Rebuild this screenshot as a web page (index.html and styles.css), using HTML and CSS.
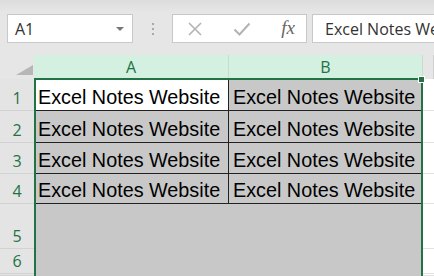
FILE: index.html
```html
<!DOCTYPE html>
<html lang="en">
  <head>
    <meta charset="UTF-8" />
    <title>Excel Notes Website</title>
    <link rel="stylesheet" href="styles.css">
  </head>
  <body>
    <div class="toolbar">
      <div class="name-box">
        <span>A1</span>
        <span class="caret"></span>
      </div>
      <div class="grip"><i></i><i></i><i></i></div>
      <div class="fx-buttons">
        <svg class="btn" width="16" height="16" viewBox="0 0 16 16">
          <path d="M2 2 L14 14 M14 2 L2 14" stroke="#b3b3b3" stroke-width="1.6" fill="none" />
        </svg>
        <svg class="btn" width="18" height="16" viewBox="0 0 18 16">
          <path d="M1.5 8.5 L6.5 13.5 L16.5 2.5" stroke="#b3b3b3" stroke-width="2" fill="none" />
        </svg>
        <span class="fx">fx</span>
      </div>
      <div class="formula">Excel Notes Website</div>
    </div>

    <div class="sheet">
      <!-- header row -->
      <div class="corner"><span class="tri"></span></div>
      <div class="col-head sel">A</div>
      <div class="col-head sel">B</div>
      <div class="col-head"></div>

      <div class="row-head">1</div>
      <div class="cell data first">Excel Notes Website</div>
      <div class="cell data last">Excel Notes Website</div>
      <div class="cell out"></div>

      <div class="row-head">2</div>
      <div class="cell data">Excel Notes Website</div>
      <div class="cell data last">Excel Notes Website</div>
      <div class="cell out"></div>

      <div class="row-head">3</div>
      <div class="cell data">Excel Notes Website</div>
      <div class="cell data last">Excel Notes Website</div>
      <div class="cell out"></div>

      <div class="row-head">4</div>
      <div class="cell data">Excel Notes Website</div>
      <div class="cell data last">Excel Notes Website</div>
      <div class="cell out"></div>

      <div class="row-head">5</div>
      <div class="cell blank"></div>
      <div class="cell blank"></div>
      <div class="cell out"></div>

      <div class="row-head">6</div>
      <div class="cell blank"></div>
      <div class="cell blank"></div>
      <div class="cell out"></div>

      <!-- row 7 only peeks in at the bottom edge -->
      <div class="row-head"></div>
      <div class="cell blank"></div>
      <div class="cell blank"></div>
      <div class="cell out"></div>

      <div class="selection"><span class="handle"></span></div>
    </div>
  </body>
</html>
```

FILE: styles.css
```css
body, html {
    margin: 0;
    padding: 0;
    width: 100%;
    height: 100%;
    overflow: hidden;
    background: #e6e6e6;
    font-family: "Open Sans", "Noto Sans", sans-serif;
}

.toolbar {
    height: 55px;
    box-sizing: border-box;
    padding: 14px 0 0 7px;
    display: flex;
    align-items: flex-start;
    background: linear-gradient(#dcdcdc, #e6e6e6 12px);
}

.name-box,
.fx-buttons,
.formula {
    height: 29px;
    box-sizing: border-box;
    background: #fff;
    border: 1px solid #c8c8c8;
    display: flex;
    align-items: center;
}

.name-box {
    width: 126px;
    padding: 0 8px 0 7px;
    justify-content: space-between;
    color: #333;
    font-size: 16px;
}

.caret {
    width: 0;
    height: 0;
    border-left: 4px solid transparent;
    border-right: 4px solid transparent;
    border-top: 4px solid #777;
}

.grip {
    width: 39px;
    height: 29px;
    display: flex;
    flex-direction: column;
    align-items: center;
    justify-content: center;
    gap: 3px;
}

.grip i {
    width: 2px;
    height: 2px;
    background: #a8a8a8;
}

.fx-buttons {
    width: 135px;
    padding: 0 11px 0 14px;
    justify-content: space-between;
}

.fx {
    font-family: "Liberation Serif", serif;
    font-style: italic;
    font-size: 19px;
    color: #666;
    margin-top: -2px;
}

.formula {
    flex: 1;
    margin-left: 5px;
    padding-left: 12px;
    border-right: none;
    white-space: nowrap;
    overflow: hidden;
    color: #333;
    font-size: 16px;
}

.sheet {
    position: relative;
    display: grid;
    grid-template-columns: 34px 195px 194px 1fr;
    grid-template-rows: 24px 32px 32px 31px 30px 45px 25px 2px;
    height: 221px;
    overflow: hidden;
}

.corner {
    position: relative;
    background: #e6e6e6;
}

.tri {
    position: absolute;
    right: 1px;
    bottom: 4px;
    width: 0;
    height: 0;
    border-left: 17px solid transparent;
    border-bottom: 10px solid #b7b7b7;
}

.col-head {
    background: #e6e6e6;
    border-right: 1px solid #d0d0d0;
    display: flex;
    align-items: center;
    justify-content: center;
    font-size: 16px;
    color: #217346;
}

.col-head.sel {
    background: #d3f0e0;
    border-right-color: #c4ddd0;
}

.row-head {
    background: #e4e4e4;
    border-bottom: 1px solid #d2d2d2;
    display: flex;
    align-items: flex-end;
    justify-content: center;
    padding-bottom: 1px;
    font-size: 16px;
    color: #217346;
}

.cell {
    box-sizing: border-box;
    background: #c8c8c8;
}

.cell.data {
    display: flex;
    align-items: flex-end;
    padding: 0 0 1px 4px;
    border-bottom: 1px solid #222;
    border-right: 1px solid #222;
    font-family: "Liberation Sans", Arial, sans-serif;
    font-size: 19.8px;
    color: #000;
    white-space: nowrap;
    overflow: hidden;
}

.cell.data.first {
    background: #fff;
}

.cell.data.last {
    border-right: none;
}

.cell.out {
    background: #fff;
    border-bottom: 1px solid #e1e1e1;
}

.selection {
    position: absolute;
    left: 34px;
    top: 23px;
    width: 389px;
    bottom: -2px;
    box-sizing: border-box;
    border: 2px solid #217346;
    pointer-events: none;
}

.handle {
    position: absolute;
    right: -4px;
    top: -4px;
    width: 5px;
    height: 5px;
    background: #217346;
    border: 1px solid #fff;
}
```
